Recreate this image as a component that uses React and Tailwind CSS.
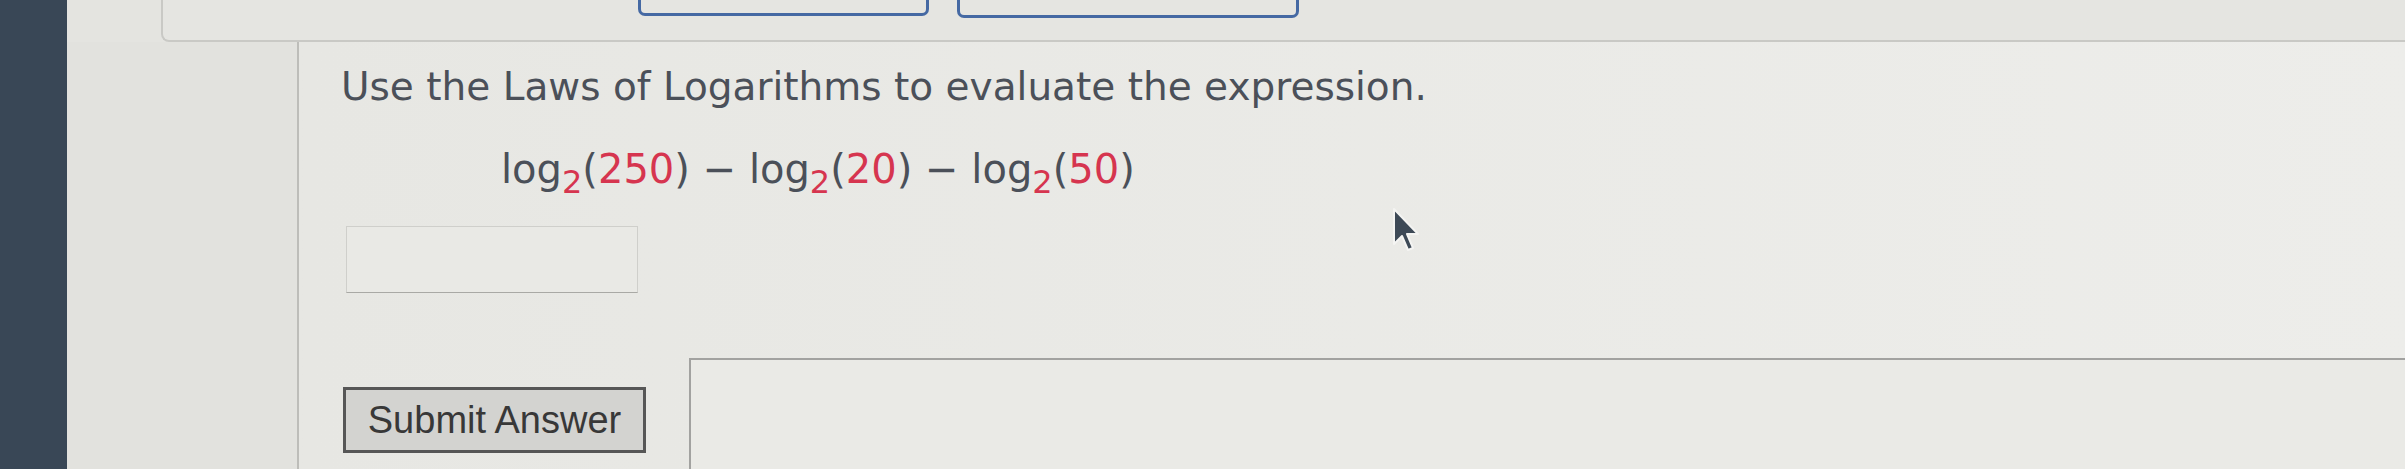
import React from "react";

const mathFont = { fontFamily: '"DejaVu Sans", Verdana, sans-serif' };

const Log = ({ arg }) => (
  <>
    log<sub className="text-[80%] text-[#d6354f] -bottom-[0.3em]">2</sub>(
    <span className="text-[#d6354f]">{arg}</span>)
  </>
);

const Cursor = () => (
  <svg
    className="absolute left-[1390px] top-[206px]"
    width="30"
    height="48"
    viewBox="0 0 30 48"
  >
    <path
      d="M4 3 L4 38 L12 30 L18 44 L23 42 L17 28 L28 28 Z"
      fill="#3d4956"
      stroke="#f4f4f2"
      strokeWidth="2"
      strokeLinejoin="round"
    />
  </svg>
);

export default function App() {
  return (
    <div className="relative flex h-[469px] w-[2405px] overflow-hidden bg-[#e4e4e0]">
      <div className="w-[67px] shrink-0 bg-[#394756]" />
      <div className="flex flex-1 flex-col">
        <div className="flex h-[42px] shrink-0">
          <div className="w-[94px] shrink-0" />
          <div className="flex flex-1 items-start gap-[28px] rounded-bl-[8px] border-b-2 border-l-2 border-[#c9c9c5] bg-[#e5e5e1] pl-[475px]">
            <div className="h-[16px] w-[291px] rounded-b-[7px] border-[3px] border-t-0 border-[#4569a3]" />
            <div className="h-[18px] w-[342px] rounded-b-[7px] border-[3px] border-t-0 border-[#4569a3]" />
          </div>
        </div>
        <div className="flex flex-1">
          <div className="w-[230px] shrink-0 bg-[#e2e2de]" />
          <div className="flex flex-1 flex-col border-l-2 border-[#bdbdb9] bg-gradient-to-r from-[#e7e7e3] to-[#ededea] pl-[42px]">
            <p
              className="mt-[22px] text-[39px] leading-[45px] text-[#4b5059]"
              style={mathFont}
            >
              Use the Laws of Logarithms to evaluate the expression.
            </p>
            <p
              className="ml-[160px] mt-[38px] text-[40px] leading-[45px] text-[#4b5059]"
              style={mathFont}
            >
              <Log arg="250" /> − <Log arg="20" /> − <Log arg="50" />
            </p>
            <div className="ml-[5px] mt-[34px] h-[67px] w-[292px] border border-[#cfcfcb] border-b-[#a9a9a5] bg-[#e9e9e5]" />
            <div className="mt-[65px] flex flex-1 items-start">
              <button
                className="ml-[2px] mt-[29px] flex h-[66px] w-[303px] items-center justify-center border-[3px] border-[#565656] bg-[#d3d3d0] text-[38px] text-[#383838]"
                style={{ fontFamily: '"Liberation Sans", Arial, sans-serif' }}
              >
                Submit Answer
              </button>
              <div className="ml-[43px] h-full flex-1 border-l-2 border-t-2 border-[#a2a2a0] bg-[#eaeae6]" />
            </div>
          </div>
        </div>
      </div>
      <Cursor />
    </div>
  );
}
